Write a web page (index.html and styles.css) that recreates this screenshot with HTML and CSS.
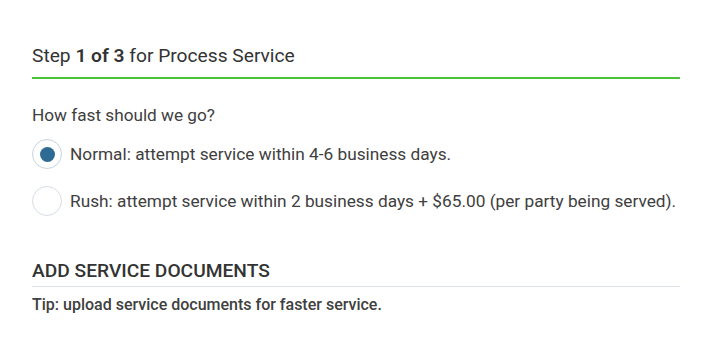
FILE: index.html
```html
<!DOCTYPE html>
<html>
<head>
<meta charset="utf-8">
<link rel="stylesheet" href="styles.css">
</head>
<body>
<div class="wrap">
  <h2 class="step">Step <b>1 of 3</b> for Process Service</h2>
  <p class="question">How fast should we go?</p>
  <div class="options">
    <label class="option"><span class="radio checked"></span><span>Normal: attempt service within 4-6 business days.</span></label>
    <label class="option"><span class="radio"></span><span>Rush: attempt service within 2 business days + $65.00 (per party being served).</span></label>
  </div>
  <h3 class="section">ADD SERVICE DOCUMENTS</h3>
  <p class="tip">Tip: upload service documents for faster service.</p>
</div>
</body>
</html>
```
FILE: styles.css
```css
html, body { margin: 0; padding: 0; background: #fff; }
body { font-family: Roboto, "Liberation Sans", sans-serif; color: #404040; }
.wrap { width: 648px; margin-left: 32px; padding-top: 44px; }
.step { margin: 0; font-size: 19.2px; font-weight: 400; color: #333; padding-bottom: 10px; border-bottom: 2px solid #4cc23a; line-height: 23px; }
.step b { font-weight: 600; }
.question { margin: 26px 0 0; font-size: 17.2px; line-height: 20px; color: #404040; }
.options { display: flex; flex-direction: column; gap: 17px; margin-top: 14px; }
.option { display: flex; align-items: center; gap: 8px; font-size: 17.25px; line-height: 30px; color: #404040; }
.radio { width: 28px; height: 28px; border: 1px solid #d6dde5; border-radius: 50%; display: flex; align-items: center; justify-content: center; box-sizing: content-box; flex: none; }
.radio.checked { border-color: #c8d3de; }
.radio.checked::after { content: ""; width: 15px; height: 15px; border-radius: 50%; background: #2e6b94; }
.section { margin: 43px 0 0; font-size: 19.2px; font-weight: 500; color: #333; line-height: 23px; padding-bottom: 4px; border-bottom: 1px solid #dde3ea; }
.tip { margin: 8px 0 0; font-size: 16px; font-weight: 500; color: #404040; line-height: 19px; }
```
